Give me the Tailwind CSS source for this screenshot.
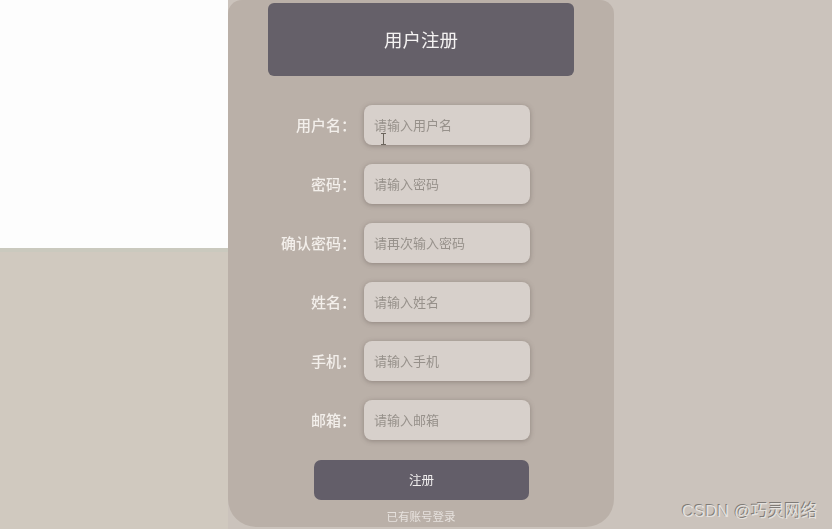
<!DOCTYPE html>
<html lang="zh">
<head>
    <meta charset="UTF-8">
    <title>用户注册</title>
    <script src="https://cdn.jsdelivr.net/npm/@tailwindcss/browser@4"></script>
</head>
<body class="overflow-hidden bg-[#cbc3bc]">
    <div class="relative flex h-[529px] w-[832px] overflow-hidden font-['Noto_Sans_CJK_SC','Liberation_Sans',sans-serif]">
        <!-- left side -->
        <div class="flex w-[228px] flex-col">
            <div class="h-[248px] bg-[#fdfdfd]"></div>
            <div class="h-[4px] bg-[#cac9be]"></div>
            <div class="flex-1 bg-[#d0c9bf]"></div>
        </div>

        <!-- register card -->
        <div class="h-[527px] w-[386px] rounded-t-[14px] rounded-b-[28px] bg-[#bab0a8] pt-[3px] blur-[0.4px]">
            <div class="mx-[40px] flex h-[73px] w-[306px] items-center justify-center rounded-[6px] bg-[#656069] text-[18.5px] text-[#f4f2f2]">用户注册</div>

            <form class="mt-[29px] flex flex-col gap-[19px]">
                <div class="flex items-center">
                    <label class="w-[128px] text-right text-[15px] font-medium text-[#f3efeb]">用户名：</label>
                    <div class="ml-[8px] flex h-[40px] w-[166px] items-center rounded-[8px] bg-[#d7d0cb] pl-[10px] text-[13px] text-[#97918b] shadow-[0_1px_5px_rgba(90,80,75,0.45)]">请输入用户名</div>
                </div>
                <div class="flex items-center">
                    <label class="w-[128px] text-right text-[15px] font-medium text-[#f3efeb]">密码：</label>
                    <div class="ml-[8px] flex h-[40px] w-[166px] items-center rounded-[8px] bg-[#d7d0cb] pl-[10px] text-[13px] text-[#97918b] shadow-[0_1px_5px_rgba(90,80,75,0.45)]">请输入密码</div>
                </div>
                <div class="flex items-center">
                    <label class="w-[128px] text-right text-[15px] font-medium text-[#f3efeb]">确认密码：</label>
                    <div class="ml-[8px] flex h-[40px] w-[166px] items-center rounded-[8px] bg-[#d7d0cb] pl-[10px] text-[13px] text-[#97918b] shadow-[0_1px_5px_rgba(90,80,75,0.45)]">请再次输入密码</div>
                </div>
                <div class="flex items-center">
                    <label class="w-[128px] text-right text-[15px] font-medium text-[#f3efeb]">姓名：</label>
                    <div class="ml-[8px] flex h-[40px] w-[166px] items-center rounded-[8px] bg-[#d7d0cb] pl-[10px] text-[13px] text-[#97918b] shadow-[0_1px_5px_rgba(90,80,75,0.45)]">请输入姓名</div>
                </div>
                <div class="flex items-center">
                    <label class="w-[128px] text-right text-[15px] font-medium text-[#f3efeb]">手机：</label>
                    <div class="ml-[8px] flex h-[40px] w-[166px] items-center rounded-[8px] bg-[#d7d0cb] pl-[10px] text-[13px] text-[#97918b] shadow-[0_1px_5px_rgba(90,80,75,0.45)]">请输入手机</div>
                </div>
                <div class="flex items-center">
                    <label class="w-[128px] text-right text-[15px] font-medium text-[#f3efeb]">邮箱：</label>
                    <div class="ml-[8px] flex h-[40px] w-[166px] items-center rounded-[8px] bg-[#d7d0cb] pl-[10px] text-[13px] text-[#97918b] shadow-[0_1px_5px_rgba(90,80,75,0.45)]">请输入邮箱</div>
                </div>
                <div class="mt-[1px] ml-[86px] flex h-[40px] w-[215px] items-center justify-center rounded-[7px] bg-[#635e69] text-[12.5px] text-[#f0eeee]">注册</div>
            </form>
            <p class="mt-[8px] text-center text-[11.5px] leading-[16px] text-[#e6e1dd]">已有账号登录</p>
        </div>

        <!-- right side -->
        <div class="flex-1 bg-[#cbc3bc]"></div>

        <!-- text cursor over the first input -->
        <svg class="absolute left-[380px] top-[133px]" width="7" height="12" viewBox="0 0 7 12" fill="none" stroke="#6b655c" stroke-width="1">
            <path d="M1 .5h5M3.500 .5v11M1 11.500h5"/>
        </svg>

        <!-- watermark -->
        <div class="absolute right-[14px] top-[501px] text-[16.5px] leading-[20px] tracking-[0.2px] text-[#e4e1de] [text-shadow:-1px_-1px_0_#7f7b77] font-['Liberation_Sans','Noto_Sans_CJK_SC',sans-serif]">CSDN @巧灵网络</div>
    </div>
</body>
</html>
